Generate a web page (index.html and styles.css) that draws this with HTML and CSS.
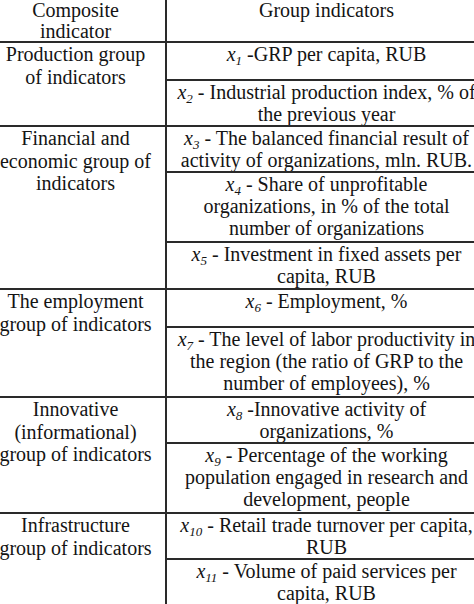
FILE: index.html
```html
<!DOCTYPE html>
<html>
<head>
<meta charset="utf-8">
<link rel="stylesheet" href="styles.css">
</head>
<body>
<table class="grid">
  <colgroup><col class="c-left"><col class="c-right"></colgroup>
  <tr class="r-head">
    <td class="head">Composite<br>indicator</td>
    <td class="head">Group indicators</td>
  </tr>
  <tr class="r1">
    <td class="group" rowspan="2">Production group<br>of indicators</td>
    <td class="ind"><i>x</i><sub>1</sub> -GRP per capita, RUB</td>
  </tr>
  <tr class="r2">
    <td class="ind"><i>x</i><sub>2</sub> - Industrial production index, % of<br>the previous year</td>
  </tr>
  <tr class="r2">
    <td class="group" rowspan="3">Financial and<br>economic group of<br>indicators</td>
    <td class="ind"><i>x</i><sub>3</sub> - The balanced financial result of<br>activity of organizations, mln. RUB.</td>
  </tr>
  <tr class="r3">
    <td class="ind"><i>x</i><sub>4</sub> - Share of unprofitable<br>organizations, in % of the total<br>number of organizations</td>
  </tr>
  <tr class="r2b">
    <td class="ind"><i>x</i><sub>5</sub> - Investment in fixed assets per<br>capita, RUB</td>
  </tr>
  <tr class="r1">
    <td class="group" rowspan="2">The employment<br>group of indicators</td>
    <td class="ind"><i>x</i><sub>6</sub> - Employment, %</td>
  </tr>
  <tr class="r3">
    <td class="ind"><i>x</i><sub>7</sub> - The level of labor productivity in<br>the region (the ratio of GRP to the<br>number of employees), %</td>
  </tr>
  <tr class="r2">
    <td class="group" rowspan="2">Innovative<br>(informational)<br>group of indicators</td>
    <td class="ind"><i>x</i><sub>8</sub> -Innovative activity of<br>organizations, %</td>
  </tr>
  <tr class="r3">
    <td class="ind"><i>x</i><sub>9</sub> - Percentage of the working<br>population engaged in research and<br>development, people</td>
  </tr>
  <tr class="r2">
    <td class="group" rowspan="2">Infrastructure<br>group of indicators</td>
    <td class="ind"><i>x</i><sub>10</sub> - Retail trade turnover per capita,<br>RUB</td>
  </tr>
  <tr class="r2">
    <td class="ind"><i>x</i><sub>11</sub> - Volume of paid services per<br>capita, RUB</td>
  </tr>
</table>
</body>
</html>
```
FILE: styles.css
```css
html, body {
  margin: 0;
  padding: 0;
  background: #ffffff;
  overflow: hidden;
}
body {
  width: 474px;
  height: 604px;
}
.grid {
  border-collapse: collapse;
  table-layout: fixed;
  width: 500px;
  margin-left: -14px;
  margin-top: 0;
  font-family: "Liberation Serif", "Times New Roman", serif;
  font-size: 20px;
  line-height: 22px;
  color: #141414;
}
.c-left { width: 180px; }
.c-right { width: 320px; }
.grid td {
  border: 2px solid #2a2a2a;
  padding: 0 2px;
  vertical-align: top;
  text-align: center;
  white-space: nowrap;
  overflow: hidden;
}
.grid td.head { line-height: 20.5px; }
.grid td.group { line-height: 22.5px; }
.grid tr:first-child td { border-top: none; }
.grid td.group { border-left: none; }
.grid td.ind, .grid td.head:last-child { border-right: none; }
.grid td.head:first-child { border-left: none; }
.grid tr:last-child td { border-bottom: none; }
.r-head { height: 42px; }
.r1 { height: 38px; }
.r2 { height: 46px; }
.r2b { height: 47px; }
.r3 { height: 70px; }
.ind i { font-style: italic; }
.ind sub {
  font-style: italic;
  font-size: 13px;
  line-height: 0;
  vertical-align: -4px;
}
```
